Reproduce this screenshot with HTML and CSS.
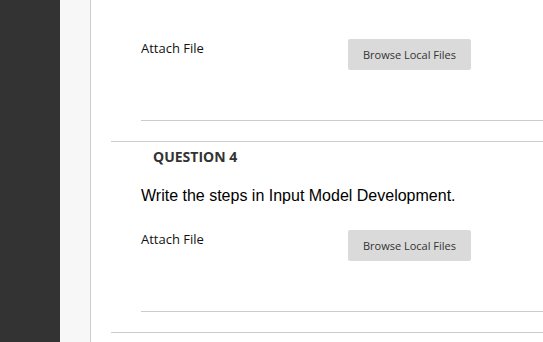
FILE: index.html
```html
<!DOCTYPE html>
<html>
<head>
<meta charset="utf-8">
<link rel="stylesheet" href="styles.css">
</head>
<body>
<div class="page">
  <div class="sidebar"></div>
  <div class="rail"></div>
  <div class="main">
    <div class="question first">
      <div class="answer">
        <div class="attach-row">
          <div class="attach-label">Attach File</div>
          <button class="browse">Browse Local Files</button>
        </div>
      </div>
    </div>
    <div class="question">
      <h3 class="q-title">QUESTION 4</h3>
      <div class="answer">
        <p class="q-text">Write the steps in Input Model Development.</p>
        <div class="attach-row">
          <div class="attach-label">Attach File</div>
          <button class="browse">Browse Local Files</button>
        </div>
      </div>
    </div>
  </div>
</div>
</body>
</html>
```
FILE: styles.css
```css
html, body {
  margin: 0;
  padding: 0;
  background: #ffffff;
}
.page {
  display: flex;
  height: 342px;
  overflow: hidden;
  font-family: "Open Sans", "Liberation Sans", sans-serif;
}
.sidebar {
  width: 60px;
  flex: none;
  background: #333333;
}
.rail {
  width: 30px;
  flex: none;
  background: #f7f7f7;
  border-right: 1px solid #cccccc;
}
.main {
  flex: 1;
  padding-left: 20px;
  min-width: 0;
}
.question {
  border-bottom: 1px solid #cccccc;
  padding-bottom: 20px;
}
.question.first {
  padding-top: 39px;
}
.answer {
  margin-left: 30px;
  border-bottom: 1px solid #cccccc;
  padding-bottom: 50px;
}
.attach-row {
  display: flex;
  align-items: flex-start;
}
.attach-label {
  width: 207px;
  flex: none;
  font-size: 13px;
  line-height: 18px;
  color: #111111;
}
.browse {
  margin: 0;
  width: 123px;
  height: 31px;
  border: none;
  border-radius: 2px;
  background: #dadada;
  color: #333333;
  font-family: "Open Sans", "Liberation Sans", sans-serif;
  font-size: 11px;
  padding: 0;
}
.q-title {
  margin: 6px 0 0 42px;
  font-size: 14px;
  line-height: 18px;
  font-weight: 700;
  color: #333333;
}
.q-text {
  margin: 20px 0 25px 0;
  font-family: "Liberation Sans", Arial, sans-serif;
  font-size: 16px;
  line-height: 19px;
  color: #000000;
}
```
